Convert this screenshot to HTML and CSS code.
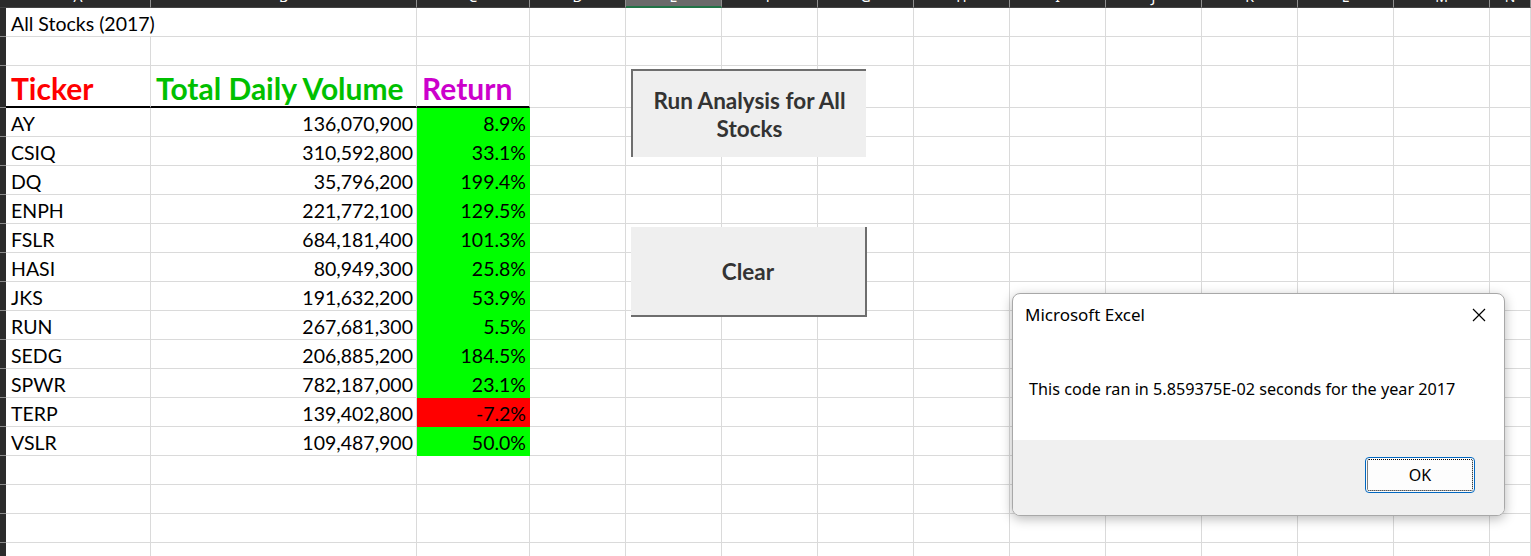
FILE: index.html
```html
<!DOCTYPE html>
<html lang="en">
<head>
<meta charset="utf-8">
<title>All Stocks (2017)</title>
<link rel="stylesheet" href="styles.css">
</head>
<body>
<div class="sheet">
  <div class="row hdr">
    <div class="rh corner"></div>
    <div class="ch"><span>A</span></div><div class="ch"><span>B</span></div><div class="ch"><span>C</span></div><div class="ch"><span>D</span></div><div class="ch sel"><span>E</span></div><div class="ch"><span>F</span></div><div class="ch"><span>G</span></div><div class="ch"><span>H</span></div><div class="ch"><span>I</span></div><div class="ch"><span>J</span></div><div class="ch"><span>K</span></div><div class="ch"><span>L</span></div><div class="ch"><span>M</span></div><div class="ch"><span>N</span></div>
  </div>
  <div class="row">
    <div class="rh"></div>
    <div class="c span2">All Stocks (2017)</div><div class="c"></div><div class="c"></div><div class="c"></div><div class="c"></div><div class="c"></div><div class="c"></div><div class="c"></div><div class="c"></div><div class="c"></div><div class="c"></div><div class="c"></div><div class="c"></div>
  </div>
  <div class="row">
    <div class="rh"></div>
    <div class="c"></div><div class="c"></div><div class="c"></div><div class="c"></div><div class="c"></div><div class="c"></div><div class="c"></div><div class="c"></div><div class="c"></div><div class="c"></div><div class="c"></div><div class="c"></div><div class="c"></div><div class="c"></div>
  </div>
  <div class="row tall">
    <div class="rh"></div>
    <div class="c th red">Ticker</div><div class="c th grn">Total Daily Volume</div><div class="c th mag">Return</div><div class="c"></div><div class="c"></div><div class="c"></div><div class="c"></div><div class="c"></div><div class="c"></div><div class="c"></div><div class="c"></div><div class="c"></div><div class="c"></div><div class="c"></div>
  </div>
  <div class="row"><div class="rh"></div><div class="c">AY</div><div class="c num">136,070,900</div><div class="c num up">8.9%</div><div class="c"></div><div class="c"></div><div class="c"></div><div class="c"></div><div class="c"></div><div class="c"></div><div class="c"></div><div class="c"></div><div class="c"></div><div class="c"></div><div class="c"></div></div>
  <div class="row"><div class="rh"></div><div class="c">CSIQ</div><div class="c num">310,592,800</div><div class="c num up">33.1%</div><div class="c"></div><div class="c"></div><div class="c"></div><div class="c"></div><div class="c"></div><div class="c"></div><div class="c"></div><div class="c"></div><div class="c"></div><div class="c"></div><div class="c"></div></div>
  <div class="row"><div class="rh"></div><div class="c">DQ</div><div class="c num">35,796,200</div><div class="c num up">199.4%</div><div class="c"></div><div class="c"></div><div class="c"></div><div class="c"></div><div class="c"></div><div class="c"></div><div class="c"></div><div class="c"></div><div class="c"></div><div class="c"></div><div class="c"></div></div>
  <div class="row"><div class="rh"></div><div class="c">ENPH</div><div class="c num">221,772,100</div><div class="c num up">129.5%</div><div class="c"></div><div class="c"></div><div class="c"></div><div class="c"></div><div class="c"></div><div class="c"></div><div class="c"></div><div class="c"></div><div class="c"></div><div class="c"></div><div class="c"></div></div>
  <div class="row"><div class="rh"></div><div class="c">FSLR</div><div class="c num">684,181,400</div><div class="c num up">101.3%</div><div class="c"></div><div class="c"></div><div class="c"></div><div class="c"></div><div class="c"></div><div class="c"></div><div class="c"></div><div class="c"></div><div class="c"></div><div class="c"></div><div class="c"></div></div>
  <div class="row"><div class="rh"></div><div class="c">HASI</div><div class="c num">80,949,300</div><div class="c num up">25.8%</div><div class="c"></div><div class="c"></div><div class="c"></div><div class="c"></div><div class="c"></div><div class="c"></div><div class="c"></div><div class="c"></div><div class="c"></div><div class="c"></div><div class="c"></div></div>
  <div class="row"><div class="rh"></div><div class="c">JKS</div><div class="c num">191,632,200</div><div class="c num up">53.9%</div><div class="c"></div><div class="c"></div><div class="c"></div><div class="c"></div><div class="c"></div><div class="c"></div><div class="c"></div><div class="c"></div><div class="c"></div><div class="c"></div><div class="c"></div></div>
  <div class="row"><div class="rh"></div><div class="c">RUN</div><div class="c num">267,681,300</div><div class="c num up">5.5%</div><div class="c"></div><div class="c"></div><div class="c"></div><div class="c"></div><div class="c"></div><div class="c"></div><div class="c"></div><div class="c"></div><div class="c"></div><div class="c"></div><div class="c"></div></div>
  <div class="row"><div class="rh"></div><div class="c">SEDG</div><div class="c num">206,885,200</div><div class="c num up">184.5%</div><div class="c"></div><div class="c"></div><div class="c"></div><div class="c"></div><div class="c"></div><div class="c"></div><div class="c"></div><div class="c"></div><div class="c"></div><div class="c"></div><div class="c"></div></div>
  <div class="row"><div class="rh"></div><div class="c">SPWR</div><div class="c num">782,187,000</div><div class="c num up">23.1%</div><div class="c"></div><div class="c"></div><div class="c"></div><div class="c"></div><div class="c"></div><div class="c"></div><div class="c"></div><div class="c"></div><div class="c"></div><div class="c"></div><div class="c"></div></div>
  <div class="row"><div class="rh"></div><div class="c">TERP</div><div class="c num">139,402,800</div><div class="c num down">-7.2%</div><div class="c"></div><div class="c"></div><div class="c"></div><div class="c"></div><div class="c"></div><div class="c"></div><div class="c"></div><div class="c"></div><div class="c"></div><div class="c"></div><div class="c"></div></div>
  <div class="row"><div class="rh"></div><div class="c">VSLR</div><div class="c num">109,487,900</div><div class="c num up">50.0%</div><div class="c"></div><div class="c"></div><div class="c"></div><div class="c"></div><div class="c"></div><div class="c"></div><div class="c"></div><div class="c"></div><div class="c"></div><div class="c"></div><div class="c"></div></div>
  <div class="row"><div class="rh"></div><div class="c"></div><div class="c"></div><div class="c"></div><div class="c"></div><div class="c"></div><div class="c"></div><div class="c"></div><div class="c"></div><div class="c"></div><div class="c"></div><div class="c"></div><div class="c"></div><div class="c"></div><div class="c"></div></div>
  <div class="row"><div class="rh"></div><div class="c"></div><div class="c"></div><div class="c"></div><div class="c"></div><div class="c"></div><div class="c"></div><div class="c"></div><div class="c"></div><div class="c"></div><div class="c"></div><div class="c"></div><div class="c"></div><div class="c"></div><div class="c"></div></div>
  <div class="row"><div class="rh"></div><div class="c"></div><div class="c"></div><div class="c"></div><div class="c"></div><div class="c"></div><div class="c"></div><div class="c"></div><div class="c"></div><div class="c"></div><div class="c"></div><div class="c"></div><div class="c"></div><div class="c"></div><div class="c"></div></div>
  <div class="row"><div class="rh"></div><div class="c"></div><div class="c"></div><div class="c"></div><div class="c"></div><div class="c"></div><div class="c"></div><div class="c"></div><div class="c"></div><div class="c"></div><div class="c"></div><div class="c"></div><div class="c"></div><div class="c"></div><div class="c"></div></div>
</div>

<div class="btn btn-run">Run Analysis for All<br>Stocks</div>
<div class="btn btn-clear">Clear</div>

<div class="dlg">
  <div class="dlg-title">
    <span class="dlg-caption">Microsoft Excel</span>
    <svg class="dlg-close" width="14" height="14" viewBox="0 0 14 14"><path d="M1 1 L13 13 M13 1 L1 13" stroke="#000" stroke-width="1.2" fill="none"/></svg>
  </div>
  <div class="dlg-body">This code ran in 5.859375E-02 seconds for the year 2017</div>
  <div class="dlg-foot"><div class="ok">OK</div></div>
</div>
</body>
</html>
```
FILE: styles.css
```css
* { box-sizing: border-box; }
html, body { margin: 0; padding: 0; }
body {
  width: 1531px;
  height: 556px;
  overflow: hidden;
  position: relative;
  background: #fff;
  font-family: Lato, "Noto Sans", sans-serif;
}
.row {
  display: grid;
  grid-template-columns: 6px 145px 266px 113px repeat(10, 96px) 1fr;
  height: 29px;
}
.row.hdr { height: 8px; }
.row.tall { height: 42px; }

.rh { background: #2b2b2b; border-bottom: 1px solid #8a8a8a; }
.rh.corner { border-bottom: 1px solid #444; }

.ch {
  background: #2b2b2b;
  border-right: 1px solid #8f8f8f;
  border-bottom: 1px solid #444;
  overflow: hidden;
  display: flex;
  justify-content: center;
  color: #fff;
  font: 14px/14px "Noto Sans", sans-serif;
}
.ch span { margin-top: -10px; }
.ch.sel { background: #6a6a6a; border-bottom: 2px solid #217346; }

.c {
  border-right: 1px solid #dadada;
  border-bottom: 1px solid #dadada;
  display: flex;
  align-items: flex-end;
  padding: 0 3px 0 5px;
  font-size: 19.5px;
  line-height: 24px;
  white-space: nowrap;
  color: #000;
}
.span2 { grid-column: span 2; }
.num { justify-content: flex-end; }
.up { background: #00ff00; border-color: #00ff00; }
.down { background: #ff0000; border-color: #ff0000; }

.th {
  font-weight: 700;
  font-size: 30px;
  line-height: 36px;
  padding-bottom: 0;
  border-bottom: 2px solid #000;
}
.red { color: #ff0000; }
.grn { color: #00c000; }
.mag { color: #cc00cc; }

.btn {
  position: absolute;
  background: #efefef;
  color: #333;
  font: 700 22.5px/28.5px Lato, "Noto Sans", sans-serif;
  display: flex;
  align-items: center;
  justify-content: center;
  text-align: center;
}
.btn-run {
  left: 631px; top: 69px; width: 235px; height: 88px;
  padding-top: 2px;
  border-top: 2px solid #6e6e6e;
  border-left: 2px solid #6e6e6e;
}
.btn-clear {
  left: 631px; top: 227px; width: 236px; height: 90px;
  padding-top: 2px;
  border-right: 2px solid #6e6e6e;
  border-bottom: 2px solid #6e6e6e;
}

.dlg {
  position: absolute;
  left: 1012px; top: 293px;
  width: 493px; height: 223px;
  background: #fff;
  border: 1px solid #a8a8a8;
  border-radius: 8px;
  box-shadow: 0 3px 12px rgba(0,0,0,0.28);
  display: flex;
  flex-direction: column;
  overflow: hidden;
  font-family: "Noto Sans", "Open Sans", sans-serif;
  color: #000;
}
.dlg-title {
  height: 40px;
  display: flex;
  align-items: center;
  justify-content: space-between;
  padding: 2px 18px 0 12px;
  font-size: 17px;
  line-height: 22px;
}
.dlg-caption { padding-top: 0; }
.dlg-close { display: block; }
.dlg-body {
  height: 106px;
  padding: 44px 0 0 16px;
  font-size: 16.2px;
  line-height: 22px;
  white-space: nowrap;
}
.dlg-foot {
  flex: 1;
  background: #f0f0f0;
  display: flex;
  justify-content: flex-end;
  align-items: flex-start;
  padding: 17px 29px 0 0;
}
.ok {
  width: 110px; height: 36px;
  background: #fdfdfd;
  border: 1px solid #0067c0;
  border-radius: 4px;
  outline: 1px dotted #000;
  outline-offset: -3px;
  display: flex;
  align-items: center;
  justify-content: center;
  font-size: 16px;
}
```
